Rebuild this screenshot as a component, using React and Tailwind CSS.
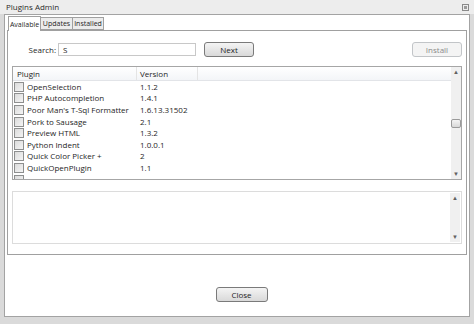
import React from 'react';

const plugins = [
  ['OpenSelection', '1.1.2'],
  ['PHP Autocompletion', '1.4.1'],
  ["Poor Man's T-Sql Formatter", '1.6.13.31502'],
  ['Pork to Sausage', '2.1'],
  ['Preview HTML', '1.3.2'],
  ['Python Indent', '1.0.0.1'],
  ['Quick Color Picker +', '2'],
  ['QuickOpenPlugin', '1.1'],
];

const Check = () => (
  <span className="w-[10px] h-[10px] border border-[#8e8f8f] bg-gradient-to-br from-[#dcdcdc] to-[#f4f4f4] shrink-0" />
);

const ScrollBar = ({ thumb }) => (
  <div className="w-[10px] bg-[#f0f0f0] flex flex-col items-center justify-between relative py-[2px]">
    <span className="text-[6px] leading-none text-[#606060]">▲</span>
    {thumb && (
      <span className="absolute left-0 top-[52px] w-[10px] h-[9px] border border-[#9a9a9a] rounded-[2px] bg-gradient-to-b from-[#f4f4f4] to-[#d8d8d8]" />
    )}
    <span className="text-[6px] leading-none text-[#606060]">▼</span>
  </div>
);

const Button = ({ children, disabled, className = '' }) => (
  <button
    className={
      'h-[15px] rounded-[3px] border text-[8px] leading-none ' +
      (disabled
        ? 'border-[#c2c5c8] bg-[#f4f4f4] text-[#8a8a8a] '
        : 'border-[#7a7a7a] bg-gradient-to-b from-[#f4f4f4] to-[#d9d9d9] text-[#1e1e1e] ') +
      className
    }
  >
    {children}
  </button>
);

export default function App() {
  return (
    <div
      className="w-[474px] h-[324px] bg-[#dadada] flex flex-col text-[#1e1e1e] overflow-hidden"
      style={{ fontFamily: '"Open Sans", "Liberation Sans", sans-serif' }}
    >
      {/* Title bar */}
      <div className="h-[14px] bg-[#ededed] flex items-center justify-between pl-[6px] pr-[5px] shrink-0">
        <span className="text-[8px] leading-none text-[#2a2a2a]">Plugins Admin</span>
        <span className="w-[7px] h-[7px] border border-[#8a8a8a] flex items-center justify-center">
          <span className="w-[3px] h-[3px] bg-[#9a9a9a]" />
        </span>
      </div>

      {/* Window body */}
      <div className="flex-1 mx-[4px] mb-[7px] border border-[#a3a3a3] bg-white flex flex-col">
        {/* Tabs */}
        <div className="flex items-end pl-[3px] pt-[1px] h-[15px] text-[7px] leading-none">
          <div className="h-[15px] w-[33px] flex items-center justify-center border border-b-0 border-[#a0a0a0] bg-white relative z-10 -mb-px">
            Available
          </div>
          <div className="h-[13px] w-[32px] flex items-center justify-center border border-l-0 border-[#a0a0a0] bg-[#ececec]">
            Updates
          </div>
          <div className="h-[13px] w-[31px] flex items-center justify-center border border-l-0 border-[#a0a0a0] bg-[#ececec]">
            Installed
          </div>
        </div>

        {/* Tab panel */}
        <div className="mx-[2px] h-[225px] border border-[#a0a0a0] flex flex-col pt-[11px] px-[4px]">
          {/* Search row */}
          <div className="flex items-center h-[15px] text-[8px] leading-none">
            <span className="w-[46px] text-right pr-[2px]">Search:</span>
            <div className="w-[138px] h-[13px] border border-[#c8c8c8] flex items-center px-[4px]">S</div>
            <Button className="w-[50px] ml-[8px]">Next</Button>
            <div className="flex-1" />
            <Button disabled className="w-[50px]">Install</Button>
          </div>

          {/* Plugin list */}
          <div className="mt-[9px] h-[114px] border border-[#a6a6a6] flex">
            <div className="flex-1 flex flex-col overflow-hidden">
              <div className="h-[14px] shrink-0 flex text-[8px] leading-none bg-gradient-to-b from-white to-[#f3f5f8] border-b border-[#e2e4e8]">
                <span className="w-[124px] pl-[4px] flex items-center border-r border-[#e4e4e4]">Plugin</span>
                <span className="w-[61px] pl-[3px] flex items-center border-r border-[#e4e4e4]">Version</span>
              </div>
              {plugins.map(([name, ver]) => (
                <div key={name} className="h-[11.6px] shrink-0 flex items-center text-[8px] leading-none">
                  <span className="w-[124px] flex items-center pl-[1px] gap-[3px]">
                    <Check />
                    {name}
                  </span>
                  <span className="pl-[3px]">{ver}</span>
                </div>
              ))}
              <div className="h-[11.6px] shrink-0 flex items-center pl-[1px]">
                <Check />
              </div>
            </div>
            <ScrollBar thumb />
          </div>

          {/* Description */}
          <div className="mt-[11px] h-[53px] border border-[#dcdcdc] flex justify-end pr-[1px] py-[1px]">
            <ScrollBar />
          </div>
        </div>

        {/* Footer */}
        <div className="flex-1 flex items-end justify-center pl-[9px] pb-[14px]">
          <Button className="w-[52px]">Close</Button>
        </div>
      </div>
    </div>
  );
}
